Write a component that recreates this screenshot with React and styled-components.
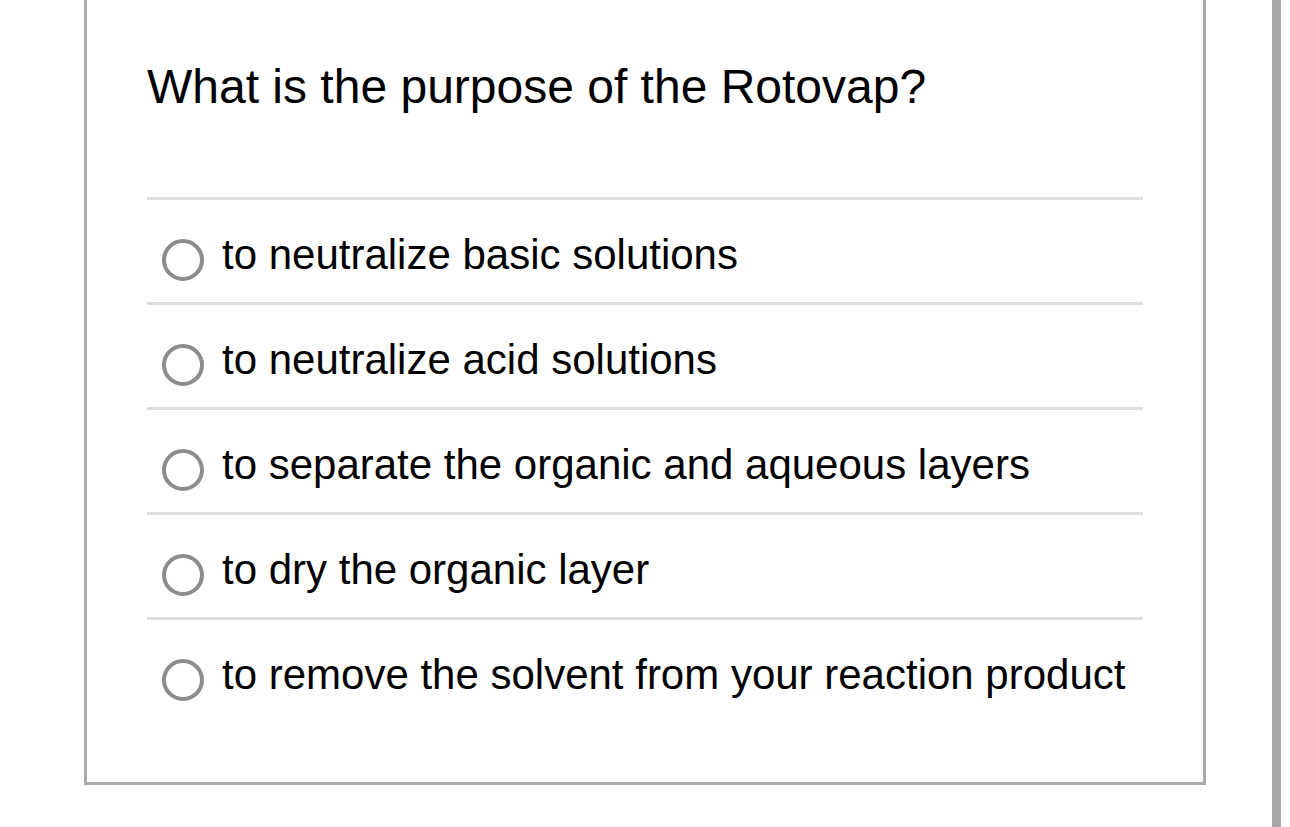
import React from "react";
import styled, { createGlobalStyle } from "styled-components";

const GlobalStyle = createGlobalStyle`
  html, body { margin: 0; padding: 0; background: #ffffff; }
  body { font-family: "Liberation Sans", Arial, sans-serif; color: #000; }
`;

const Page = styled.div`
  display: flex;
  align-items: flex-start;
  width: 1290px;
  height: 827px;
  overflow: hidden;
`;

const Card = styled.div`
  box-sizing: border-box;
  margin-left: 84px;
  width: 1122px;
  border: 3px solid #aaaaaa;
  border-top: none;
  padding: 59px 60px 60px 60px;
  background: #fff;
`;

const Title = styled.h1`
  margin: 0 0 82px 0;
  font-size: 48px;
  line-height: 56px;
  font-weight: 400;
`;

const List = styled.div`
  display: flex;
  flex-direction: column;
`;

const Row = styled.label`
  box-sizing: border-box;
  display: flex;
  align-items: flex-start;
  height: 105px;
  padding-top: 31px;
  border-top: 3px solid #dddddd;
`;

const Radio = styled.span`
  box-sizing: border-box;
  flex: none;
  width: 42px;
  height: 42px;
  margin: 8px 18px 0 15px;
  border: 4px solid #8c8c8c;
  border-radius: 50%;
`;

const OptionText = styled.span`
  font-size: 42px;
  line-height: 48px;
`;

const ScrollBar = styled.div`
  flex: none;
  margin-left: 66px;
  width: 9px;
  height: 827px;
  background: #a8a8a8;
`;

const options = [
  "to neutralize basic solutions",
  "to neutralize acid solutions",
  "to separate the organic and aqueous layers",
  "to dry the organic layer",
  "to remove the solvent from your reaction product",
];

export default function App() {
  return (
    <>
      <GlobalStyle />
      <Page>
        <Card>
          <Title>What is the purpose of the Rotovap?</Title>
          <List>
            {options.map((o) => (
              <Row key={o}>
                <Radio />
                <OptionText>{o}</OptionText>
              </Row>
            ))}
          </List>
        </Card>
        <ScrollBar />
      </Page>
    </>
  );
}
